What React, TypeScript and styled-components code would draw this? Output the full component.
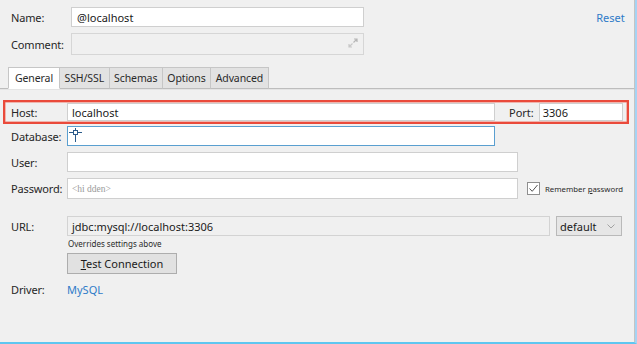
import React from "react";
import styled, { createGlobalStyle } from "styled-components";

const Global = createGlobalStyle`
  html, body { margin: 0; padding: 0; background: #f0f0f0; }
  body { font-family: "Noto Sans", "Open Sans", sans-serif; font-size: 11px; color: #1e1e1e; }
  * { box-sizing: border-box; }
`;

const Frame = styled.div`
  width: 637px;
  height: 344px;
  display: flex;
  background: #f0f0f0;
  border-right: 3px solid #a6d3f3;
  border-bottom: 2px solid #5ec6f0;
`;

const Panel = styled.div`
  flex: 1;
  display: flex;
  flex-direction: column;
  border-right: 1px solid #c4c4c4;
  padding-top: 7px;
`;

const Row = styled.div<{ $top?: number; $h?: number; $left?: number }>`
  display: flex;
  align-items: center;
  margin-top: ${(p) => p.$top ?? 0}px;
  height: ${(p) => p.$h ?? 20}px;
  padding-left: ${(p) => p.$left ?? 11}px;
`;

const Label = styled.span<{ $w: number }>`
  width: ${(p) => p.$w}px;
  flex: none;
  color: #262626;
  white-space: nowrap;
  letter-spacing: -0.15px;
`;

const Field = styled.div<{ $w: number; $h?: number; $bg?: string; $border?: string; $pad?: number }>`
  position: relative;
  width: ${(p) => p.$w}px;
  height: ${(p) => p.$h ?? 20}px;
  flex: none;
  display: flex;
  align-items: center;
  padding-left: ${(p) => p.$pad ?? 4}px;
  background: ${(p) => p.$bg ?? "#ffffff"};
  border: 1px solid ${(p) => p.$border ?? "#cfcfcf"};
  color: #1a1a1a;
  white-space: nowrap;
`;

const Reset = styled.a`
  margin-left: auto;
  margin-right: 9px;
  color: #2f7bc8;
  text-decoration: none;
`;

const ExpandIcon = styled.svg`
  position: absolute;
  right: 4px;
  top: 2px;
`;

const Tabs = styled.div`
  display: flex;
  margin-top: 12px;
  padding-left: 8px;
  height: 22px;
  border-bottom: 1px solid #bdbdbd;
  box-shadow: 0 1px 0 #e4e4e4;
`;

const Tab = styled.div<{ $active?: boolean }>`
  height: 22px;
  padding: 0 ${(p) => (p.$active ? 6 : 4.5)}px;
  display: flex;
  align-items: center;
  font-size: 10.5px;
  letter-spacing: -0.1px;
  background: ${(p) => (p.$active ? "#ffffff" : "#e2e2e2")};
  border: 1px solid #c6c6c6;
  border-left-width: ${(p) => (p.$active ? 1 : 0)}px;
  border-bottom: ${(p) => (p.$active ? "1px solid #ffffff" : "1px solid #bdbdbd")};
  color: #2a2a2a;
`;

const HostBox = styled.div`
  display: flex;
  align-items: center;
  margin: 11px 5px 0 3px;
  height: 24px;
  border: 2px solid #ea4a3b;
  box-shadow: inset 0 0 0 0.5px #ee7a6c;
  padding: 0 4px 0 6px;
`;

const PortLabel = styled.span`
  margin-left: 14px;
  margin-right: 5px;
  color: #262626;
`;

const CursorIcon = styled.svg`
  position: absolute;
  left: 1px;
  top: 1px;
`;

const Check = styled.div`
  width: 13px;
  height: 13px;
  margin-left: 9px;
  margin-right: 5px;
  border: 1px solid #8f8f8f;
  background: #ffffff;
  display: flex;
  align-items: center;
  justify-content: center;
`;

const Small = styled.span`
  font-size: 7.8px;
  color: #2a2a2a;
`;

const Placeholder = styled.span`
  font-family: "Liberation Serif", "DejaVu Serif", serif;
  font-size: 9.5px;
  color: #9a9a9a;
`;

const Select = styled.div`
  width: 66px;
  height: 20px;
  margin-left: 6px;
  display: flex;
  align-items: center;
  justify-content: space-between;
  padding: 0 6px 0 3px;
  background: #e6e6e6;
  border: 1px solid #b9b9b9;
  color: #1a1a1a;
`;

const Note = styled.div`
  margin-left: 68px;
  margin-top: 2px;
  height: 12px;
  line-height: 12px;
  font-size: 8px;
  color: #2a2a2a;
`;

const Button = styled.button`
  margin-left: 67px;
  margin-top: 3px;
  width: 110px;
  height: 21px;
  padding: 0;
  font-family: inherit;
  font-size: 11px;
  color: #1a1a1a;
  background: #e1e1e1;
  border: 1px solid #adadad;
  u { text-decoration: underline; }
`;

const Link = styled.a`
  color: #2f7bc8;
  text-decoration: none;
`;

export default function App() {
  return (
    <>
      <Global />
      <Frame>
        <Panel>
          <Row>
            <Label $w={60}>Name:</Label>
            <Field $w={293} $pad={5}>@localhost</Field>
            <Reset>Reset</Reset>
          </Row>
          <Row $top={6} $h={22}>
            <Label $w={60}>Comment:</Label>
            <Field $w={293} $h={22} $bg="#f0f0f0" $border="#d6d6d6">
              <ExpandIcon width="12" height="14" viewBox="0 0 12 14">
                <path d="M7 3 L10 3 L10 6 M10 3 L6.5 6.5" stroke="#b5b5b5" strokeWidth="1.2" fill="none" />
                <path d="M2 8 L2 11 L5 11 M2 11 L5.5 7.5" stroke="#c8c8c8" strokeWidth="1.2" fill="none" />
              </ExpandIcon>
            </Field>
          </Row>
          <Tabs>
            <Tab $active>General</Tab>
            <Tab>SSH/SSL</Tab>
            <Tab>Schemas</Tab>
            <Tab>Options</Tab>
            <Tab>Advanced</Tab>
          </Tabs>
          <HostBox>
            <Label $w={56}>Host:</Label>
            <Field $w={428} $h={18}>localhost</Field>
            <PortLabel>Port:</PortLabel>
            <Field $w={84} $h={18} $pad={3}>3306</Field>
          </HostBox>
          <Row $top={2}>
            <Label $w={56}>Database:</Label>
            <Field $w={428} $border="#5a9fd0">
              <CursorIcon width="14" height="15" viewBox="0 0 14 15">
                <path d="M6.5 0 V14 M0 4.5 H13" stroke="#2b5b8a" strokeWidth="1" />
                <rect x="4.5" y="2.5" width="4" height="4" fill="#ffffff" stroke="#2b5b8a" strokeWidth="1" />
              </CursorIcon>
            </Field>
          </Row>
          <Row $top={6}>
            <Label $w={56}>User:</Label>
            <Field $w={451} />
          </Row>
          <Row $top={6} $h={21}>
            <Label $w={56}>Password:</Label>
            <Field $w={451} $h={21}>
              <Placeholder>&lt;hi dden&gt;</Placeholder>
            </Field>
            <Check>
              <svg width="11" height="11" viewBox="0 0 11 11">
                <path d="M1.5 5.5 L4.2 8.3 L9.5 2" stroke="#555" strokeWidth="1" fill="none" />
              </svg>
            </Check>
            <Small>
              Remember <u>p</u>assword
            </Small>
          </Row>
          <Row $top={17}>
            <Label $w={56}>URL:</Label>
            <Field $w={483} $bg="#f0f0f0" $border="#d3d3d3">
              jdbc:mysql://localhost:3306
            </Field>
            <Select>
              <span>default</span>
              <svg width="8" height="5" viewBox="0 0 8 5">
                <path d="M0.5 0.5 L4 4 L7.5 0.5" stroke="#9a9a9a" strokeWidth="0.9" fill="none" />
              </svg>
            </Select>
          </Row>
          <Note>Overrides settings above</Note>
          <Button>
            <u>T</u>est Connection
          </Button>
          <Row $top={6} $h={18}>
            <Label $w={56}>Driver:</Label>
            <Link>MySQL</Link>
          </Row>
        </Panel>
      </Frame>
    </>
  );
}
